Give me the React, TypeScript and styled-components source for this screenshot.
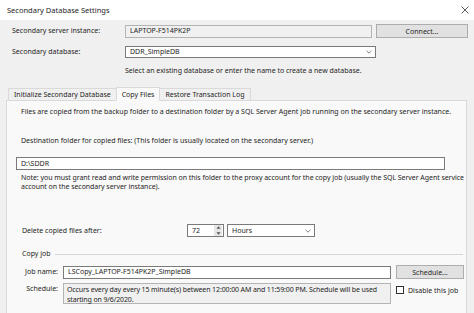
import React from 'react'
import styled, { createGlobalStyle } from 'styled-components'

const GlobalStyle = createGlobalStyle`
  html, body {
    margin: 0;
    padding: 0;
    background: #f0f0f0;
  }
  body {
    font: 7px 'Noto Sans', sans-serif;
    color: #1e1e1e;
  }
`

const Window = styled.div`
  width: 474px;
  height: 313px;
  overflow: hidden;
  background: #f0f0f0;
  display: flex;
  flex-direction: column;
`

const TitleBar = styled.div`
  flex: none;
  height: 20px;
  background: #fff;
  display: flex;
  align-items: center;
  justify-content: space-between;
  padding: 0 5px 0 7px;
  font-size: 7.5px;
`

const Body = styled.div`
  flex: 1;
  padding: 4px 7px 0 6px;
  display: flex;
  flex-direction: column;
`

const TopGrid = styled.div`
  display: grid;
  grid-template-columns: 113px 247px 4px 92px;
  grid-auto-rows: auto;
  row-gap: 8px;
  padding-left: 6px;
  align-items: center;
`

const Label = styled.div<{ $align?: string }>`
  line-height: 10px;
  white-space: nowrap;
  text-align: ${p => p.$align || 'left'};
`

const Field = styled.div<{ $readOnly?: boolean; $span?: number; $height?: number }>`
  box-sizing: border-box;
  height: ${p => p.$height || 13}px;
  grid-column: span ${p => p.$span || 1};
  background: ${p => (p.$readOnly ? '#f0f0f0' : '#fff')};
  border: 1px solid ${p => (p.$readOnly ? '#b4b4b4' : '#7a7a7a')};
  display: flex;
  align-items: center;
  padding: 0 4px;
  line-height: 10px;
  white-space: nowrap;
  overflow: hidden;
`

const Button = styled.div`
  box-sizing: border-box;
  height: 14px;
  background: #e1e1e1;
  border: 1px solid #adadad;
  display: flex;
  align-items: center;
  justify-content: center;
`

const Combo = styled(Field)`
  justify-content: space-between;
  padding-right: 3px;
`

const Hint = styled.div`
  grid-column: 2 / span 3;
  line-height: 10px;
`

const TabStrip = styled.div`
  display: flex;
  align-items: flex-end;
  height: 14px;
  margin-top: 10px;
  padding-left: 2px;
  position: relative;
  z-index: 1;
`

const Tab = styled.div<{ $active?: boolean }>`
  box-sizing: border-box;
  height: ${p => (p.$active ? 14 : 12)}px;
  padding: 0 5px;
  display: flex;
  align-items: center;
  border: 1px solid #d9d9d9;
  border-bottom: ${p => (p.$active ? '1px solid #f9f9f9' : 'none')};
  background: ${p => (p.$active ? '#f9f9f9' : '#f0f0f0')};
  margin: 0 ${p => (p.$active ? -1 : 0)}px;
  margin-bottom: ${p => (p.$active ? -1 : 0)}px;
`

const Panel = styled.div`
  flex: 1;
  border: 1px solid #d9d9d9;
  border-bottom: none;
  background: #f9f9f9;
  padding: 0 2px 0 9px;
  display: flex;
  flex-direction: column;
`

const Text = styled.div`
  line-height: 10px;
  padding-left: 5px;
`

const Note = styled.div`
  line-height: 8.6px;
  padding-left: 5px;
  letter-spacing: -0.05px;
`

const InlineRow = styled.div`
  display: flex;
  align-items: center;
  padding-left: 6px;
`

const Spinner = styled(Field)`
  width: 37px;
  margin-left: 109px;
  padding-right: 1px;
  justify-content: space-between;
`

const SpinArrows = styled.div`
  width: 8px;
  height: 11px;
  background: #e6e6e6;
  display: flex;
  flex-direction: column;
  align-items: center;
  justify-content: space-around;
`

const SectionHeader = styled.div`
  display: flex;
  align-items: center;
  gap: 4px;
  padding-left: 6px;
  margin-top: 12px;
  line-height: 10px;
  &::after {
    content: '';
    flex: 1;
    height: 1px;
    background: #d5d5d5;
    margin-right: 1px;
  }
`

const JobGrid = styled.div`
  display: grid;
  grid-template-columns: 37px 328px 68px;
  column-gap: 5px;
  row-gap: 4px;
  padding-left: 5px;
  margin-top: 6px;
`

const ScheduleBox = styled.div`
  box-sizing: border-box;
  height: 21px;
  border: 1px solid #b4b4b4;
  background: #f0f0f0;
  padding: 1px 2px 0 3px;
  line-height: 9.5px;
  letter-spacing: -0.12px;
`

const CheckRow = styled.div`
  display: flex;
  align-items: flex-start;
  gap: 4px;
  padding-top: 3px;
`

const CheckBox = styled.div`
  box-sizing: border-box;
  width: 8px;
  height: 8px;
  border: 1px solid #333;
  background: #fff;
  flex: none;
`

const Chevron = () => (
  <svg width="6" height="4" viewBox="0 0 6 4">
    <path d="M0.5 0.8 L3 3.2 L5.5 0.8" fill="none" stroke="#606060" strokeWidth="0.8" />
  </svg>
)

const Tri = ({ up }: { up?: boolean }) => (
  <svg width="5" height="3" viewBox="0 0 5 3">
    <path d={up ? 'M0.5 2.7 L2.5 0.3 L4.5 2.7Z' : 'M0.5 0.3 L2.5 2.7 L4.5 0.3Z'} fill="#505050" />
  </svg>
)

const App = () => (
  <Window>
    <GlobalStyle />
    <TitleBar>
      <span>Secondary Database Settings</span>
      <svg width="8" height="8" viewBox="0 0 8 8">
        <path d="M0.5 0.5 L7.5 7.5 M7.5 0.5 L0.5 7.5" stroke="#333" strokeWidth="0.8" />
      </svg>
    </TitleBar>
    <Body>
      <TopGrid>
        <Label>Secondary server instance:</Label>
        <Field $readOnly>LAPTOP-F514PK2P</Field>
        <span />
        <Button>Connect...</Button>
        <Label>Secondary database:</Label>
        <Combo $span={2} $height={12}>
          <span>DDR_SimpleDB</span>
          <Chevron />
        </Combo>
        <span />
        <span />
        <Hint>Select an existing database or enter the name to create a new database.</Hint>
      </TopGrid>

      <TabStrip>
        <Tab>Initialize Secondary Database</Tab>
        <Tab $active>Copy Files</Tab>
        <Tab>Restore Transaction Log</Tab>
      </TabStrip>
      <Panel>
        <Text style={{ marginTop: 6 }}>
          Files are copied from the backup folder to a destination folder by a SQL Server Agent job running on the secondary server instance.
        </Text>
        <Text style={{ marginTop: 19 }}>
          Destination folder for copied files: (This folder is usually located on the secondary server.)
        </Text>
        <Field style={{ width: 429, marginTop: 11 }}>D:\SDDR</Field>
        <Note style={{ marginTop: 4 }}>
          Note: you must grant read and write permission on this folder to the proxy account for the copy job (usually the SQL Server Agent service account on the secondary server instance).
        </Note>

        <InlineRow style={{ marginTop: 33 }}>
          <Label style={{ width: 56 }}>Delete copied files after:</Label>
          <Spinner>
            <span>72</span>
            <SpinArrows>
              <Tri up />
              <Tri />
            </SpinArrows>
          </Spinner>
          <Combo style={{ width: 88, marginLeft: 3 }}>
            <span>Hours</span>
            <Chevron />
          </Combo>
        </InlineRow>

        <SectionHeader>Copy job</SectionHeader>
        <JobGrid>
          <Label $align="right" style={{ alignSelf: 'center' }}>Job name:</Label>
          <Field style={{ alignSelf: 'center' }}>LSCopy_LAPTOP-F514PK2P_SimpleDB</Field>
          <Button>Schedule...</Button>
          <Label $align="right" style={{ paddingTop: 1 }}>Schedule:</Label>
          <ScheduleBox>
            Occurs every day every 15 minute(s) between 12:00:00 AM and 11:59:00 PM. Schedule will be used starting on 9/6/2020.
          </ScheduleBox>
          <CheckRow>
            <CheckBox />
            <span>Disable this job</span>
          </CheckRow>
        </JobGrid>
      </Panel>
    </Body>
  </Window>
)

export default App
